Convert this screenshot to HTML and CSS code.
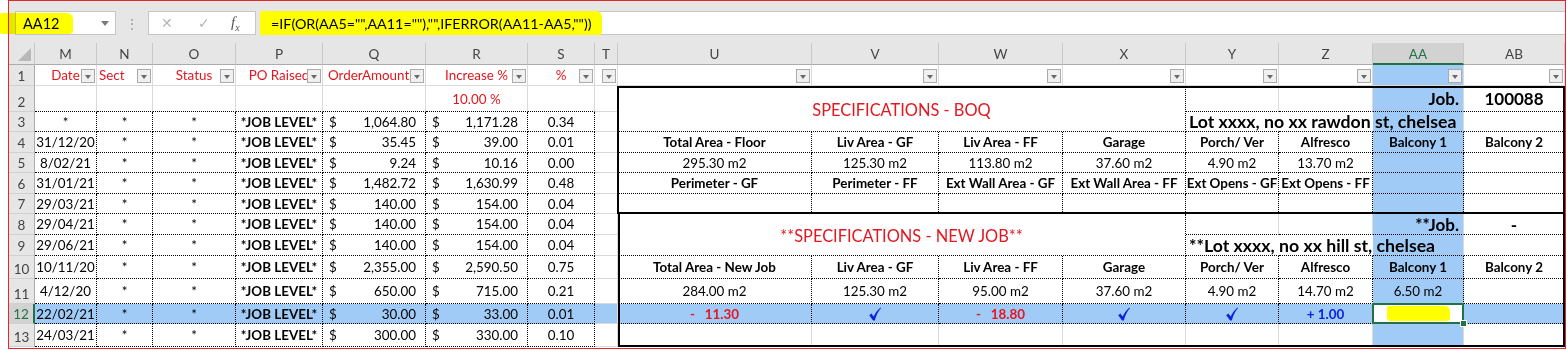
FILE: index.html
```html
<!DOCTYPE html>
<html>

<head>
  <meta charset="utf-8" />
  <title>Specifications - BOQ</title>
  <link rel="stylesheet" href="styles.css">
</head>

<body>
  <div class="hl-name"></div>
  <div class="frame">
    <div class="fbar">
      <div class="namebox"><span>AA12</span><i class="dd"></i></div>
      <div class="grip">&#8942;</div>
      <div class="fxbox">
        <span class="x">&#10005;</span>
        <span class="ok">&#10003;</span>
        <span class="fx"><i>f</i><sub>x</sub></span>
      </div>
      <div class="formula"><span class="hl">=IF(OR(AA5="",AA11=""),"",IFERROR(AA11-AA5,""))</span></div>
    </div>

    <div class="sheet">
      <!-- column headers -->
      <div class="h corner"><i></i></div>
      <div class="h">M</div><div class="h">N</div><div class="h">O</div><div class="h">P</div>
      <div class="h">Q</div><div class="h">R</div><div class="h">S</div><div class="h">T</div>
      <div class="h">U</div><div class="h">V</div><div class="h">W</div><div class="h">X</div>
      <div class="h">Y</div><div class="h">Z</div><div class="h act">AA</div><div class="h">AB</div>

      <!-- row 1 -->
      <div class="rh">1</div>
      <div class="red">Date<b class="fb"></b></div>
      <div class="red l">Sect<b class="fb"></b></div>
      <div class="red">Status<b class="fb"></b></div>
      <div class="red">PO Raised<b class="fb"></b></div>
      <div class="red l pq">OrderAmount<b class="fb"></b></div>
      <div class="red">Increase %<b class="fb"></b></div>
      <div class="red">%<b class="fb"></b></div>
      <div><b class="fb"></b></div>
      <div><b class="fb"></b></div>
      <div><b class="fb"></b></div>
      <div><b class="fb"></b></div>
      <div><b class="fb"></b></div>
      <div><b class="fb"></b></div>
      <div><b class="fb"></b></div>
      <div class="aa"><b class="fb"></b></div>
      <div><b class="fb"></b></div>

      <!-- row 2 -->
      <div class="rh">2</div>
      <div class="db"></div><div class="db"></div><div class="db"></div><div class="db"></div><div class="db"></div>
      <div class="db red">10.00 %</div>
      <div class="db"></div>
      <div></div>
      <div class="title dr db">SPECIFICATIONS - BOQ</div>
      <div class="db"></div>
      <div class="db"></div>
      <div class="aa db big r">Job.</div>
      <div class="db big">100088</div>

      <!-- row 3 -->
      <div class="rh">3</div>
      <div class="d">*</div><div class="d">*</div><div class="d">*</div><div class="d b">*JOB LEVEL*</div>
      <div class="d acc"><span>$</span><span>1,064.80</span></div>
      <div class="d acc"><span>$</span><span>1,171.28</span></div>
      <div class="d">0.34</div>
      <div></div>
      <div class="db big l spill">Lot xxxx, no xx rawdon st, chelsea</div>
      <div class="db nr"></div>
      <div class="aa db"></div>
      <div class="db"></div>

      <!-- row 4 -->
      <div class="rh">4</div>
      <div class="d">31/12/20</div><div class="d">*</div><div class="d">*</div><div class="d b">*JOB LEVEL*</div>
      <div class="d acc"><span>$</span><span>35.45</span></div>
      <div class="d acc"><span>$</span><span>39.00</span></div>
      <div class="d">0.01</div>
      <div></div>
      <div class="d b">Total Area - Floor</div>
      <div class="d b">Liv Area - GF</div>
      <div class="d b">Liv Area - FF</div>
      <div class="d b">Garage</div>
      <div class="d b">Porch/ Ver</div>
      <div class="d b">Alfresco</div>
      <div class="d b aa">Balcony 1</div>
      <div class="d b">Balcony 2</div>

      <!-- row 5 -->
      <div class="rh">5</div>
      <div class="d">8/02/21</div><div class="d">*</div><div class="d">*</div><div class="d b">*JOB LEVEL*</div>
      <div class="d acc"><span>$</span><span>9.24</span></div>
      <div class="d acc"><span>$</span><span>10.16</span></div>
      <div class="d">0.00</div>
      <div></div>
      <div class="d">295.30 m2</div>
      <div class="d">125.30 m2</div>
      <div class="d">113.80 m2</div>
      <div class="d">37.60 m2</div>
      <div class="d">4.90 m2</div>
      <div class="d">13.70 m2</div>
      <div class="d aa"></div>
      <div class="d"></div>

      <!-- row 6 -->
      <div class="rh">6</div>
      <div class="d">31/01/21</div><div class="d">*</div><div class="d">*</div><div class="d b">*JOB LEVEL*</div>
      <div class="d acc"><span>$</span><span>1,482.72</span></div>
      <div class="d acc"><span>$</span><span>1,630.99</span></div>
      <div class="d">0.48</div>
      <div></div>
      <div class="d b">Perimeter - GF</div>
      <div class="d b">Perimeter - FF</div>
      <div class="d b">Ext Wall Area - GF</div>
      <div class="d b">Ext Wall Area - FF</div>
      <div class="d b">Ext Opens - GF</div>
      <div class="d b">Ext Opens - FF</div>
      <div class="d aa"></div>
      <div class="d"></div>

      <!-- row 7 -->
      <div class="rh">7</div>
      <div class="d">29/03/21</div><div class="d">*</div><div class="d">*</div><div class="d b">*JOB LEVEL*</div>
      <div class="d acc"><span>$</span><span>140.00</span></div>
      <div class="d acc"><span>$</span><span>154.00</span></div>
      <div class="d">0.04</div>
      <div></div>
      <div class="dr"></div><div class="dr"></div><div class="dr"></div><div class="dr"></div>
      <div class="dr"></div><div class="dr"></div><div class="dr aa"></div><div></div>

      <!-- row 8 -->
      <div class="rh">8</div>
      <div class="d">29/04/21</div><div class="d">*</div><div class="d">*</div><div class="d b">*JOB LEVEL*</div>
      <div class="d acc"><span>$</span><span>140.00</span></div>
      <div class="d acc"><span>$</span><span>154.00</span></div>
      <div class="d">0.04</div>
      <div></div>
      <div class="title dr db">**SPECIFICATIONS - NEW JOB**</div>
      <div class="db"></div>
      <div class="db"></div>
      <div class="aa db big r">**Job.</div>
      <div class="db big">-</div>

      <!-- row 9 -->
      <div class="rh">9</div>
      <div class="d">29/06/21</div><div class="d">*</div><div class="d">*</div><div class="d b">*JOB LEVEL*</div>
      <div class="d acc"><span>$</span><span>140.00</span></div>
      <div class="d acc"><span>$</span><span>154.00</span></div>
      <div class="d">0.04</div>
      <div></div>
      <div class="db big l spill">**Lot xxxx, no xx hill st, chelsea</div>
      <div class="db nr"></div>
      <div class="aa db"></div>
      <div class="db"></div>

      <!-- row 10 -->
      <div class="rh">10</div>
      <div class="d">10/11/20</div><div class="d">*</div><div class="d">*</div><div class="d b">*JOB LEVEL*</div>
      <div class="d acc"><span>$</span><span>2,355.00</span></div>
      <div class="d acc"><span>$</span><span>2,590.50</span></div>
      <div class="d">0.75</div>
      <div></div>
      <div class="d b">Total Area - New Job</div>
      <div class="d b">Liv Area - GF</div>
      <div class="d b">Liv Area - FF</div>
      <div class="d b">Garage</div>
      <div class="d b">Porch/ Ver</div>
      <div class="d b">Alfresco</div>
      <div class="d b aa">Balcony 1</div>
      <div class="d b">Balcony 2</div>

      <!-- row 11 -->
      <div class="rh">11</div>
      <div class="d">4/12/20</div><div class="d">*</div><div class="d">*</div><div class="d b">*JOB LEVEL*</div>
      <div class="d acc"><span>$</span><span>650.00</span></div>
      <div class="d acc"><span>$</span><span>715.00</span></div>
      <div class="d">0.21</div>
      <div></div>
      <div class="d">284.00 m2</div>
      <div class="d">125.30 m2</div>
      <div class="d">95.00 m2</div>
      <div class="d">37.60 m2</div>
      <div class="d">4.90 m2</div>
      <div class="d">14.70 m2</div>
      <div class="d aa">6.50 m2</div>
      <div class="d"></div>

      <!-- row 12 (active row) -->
      <div class="rh act">12</div>
      <div class="d sr">22/02/21</div><div class="d sr">*</div><div class="d sr">*</div><div class="d sr b">*JOB LEVEL*</div>
      <div class="d sr acc"><span>$</span><span>30.00</span></div>
      <div class="d sr acc"><span>$</span><span>33.00</span></div>
      <div class="d sr">0.01</div>
      <div class="sr"></div>
      <div class="d sr b red pre">-   11.30</div>
      <div class="d sr"><svg class="tick" viewBox="0 0 12 14"><path d="M0.2 8.3 L2.4 6.6 L4.6 9.6 C6.4 5.6 8.6 2.8 11.5 0.4 L12 1.2 C9.3 4 7.2 8 5.8 13.6 L4.1 13.6 Z"/></svg></div>
      <div class="d sr b red pre">-   18.80</div>
      <div class="d sr"><svg class="tick" viewBox="0 0 12 14"><path d="M0.2 8.3 L2.4 6.6 L4.6 9.6 C6.4 5.6 8.6 2.8 11.5 0.4 L12 1.2 C9.3 4 7.2 8 5.8 13.6 L4.1 13.6 Z"/></svg></div>
      <div class="d sr"><svg class="tick" viewBox="0 0 12 14"><path d="M0.2 8.3 L2.4 6.6 L4.6 9.6 C6.4 5.6 8.6 2.8 11.5 0.4 L12 1.2 C9.3 4 7.2 8 5.8 13.6 L4.1 13.6 Z"/></svg></div>
      <div class="d sr b blu">+ 1.00</div>
      <div class="d active"><span class="mark"></span><i class="handle"></i></div>
      <div class="d sr"></div>

      <!-- row 13 -->
      <div class="rh">13</div>
      <div class="d">24/03/21</div><div class="d">*</div><div class="d">*</div><div class="d b">*JOB LEVEL*</div>
      <div class="d acc"><span>$</span><span>300.00</span></div>
      <div class="d acc"><span>$</span><span>330.00</span></div>
      <div class="d">0.10</div>
      <div></div>
      <div></div><div></div><div></div><div></div>
      <div></div><div></div><div class="aa"></div><div></div>

      <!-- thick outlines over the two spec blocks -->
      <div class="box box-top"></div>
      <div class="box box-bottom"></div>
    </div>
  </div>
</body>

</html>
```

FILE: styles.css
```css
* {
  box-sizing: border-box;
}

body {
  margin: 0;
  background-color: #ffffff;
  font-family: Lato, "Liberation Sans", sans-serif;
  color: #000000;
  overflow: hidden;
}

.frame {
  margin-left: 8px;
  width: 1558px;
  height: 349px;
  border: 1px solid #e3262b;
  background-color: #ffffff;
}

/* yellow highlighter stroke over the name box */
.hl-name {
  position: absolute;
  left: 0;
  top: 13px;
  width: 73px;
  height: 21px;
  background: #ffff00;
  border-radius: 2px 6px 4px 2px;
  mix-blend-mode: multiply;
  z-index: 5;
}

/* formula bar */
.fbar {
  height: 42px;
  background-color: #e6e6e6;
  display: flex;
  padding: 10px 0 0 6px;
}

.namebox {
  width: 101px;
  height: 24px;
  background: #ffffff;
  border: 1px solid #c6c6c6;
  display: flex;
  align-items: center;
  justify-content: space-between;
  padding: 0 6px 0 7px;
  font-size: 14.5px;
}

.dd {
  width: 0;
  height: 0;
  border-left: 4px solid transparent;
  border-right: 4px solid transparent;
  border-top: 5px solid #7a7a7a;
}

.grip {
  width: 32px;
  height: 24px;
  color: #a0a0a0;
  font-size: 14px;
  display: flex;
  align-items: center;
  justify-content: center;
}

.fxbox {
  width: 108px;
  height: 24px;
  background: #ffffff;
  border: 1px solid #c6c6c6;
  display: flex;
  align-items: center;
  padding-left: 12px;
  color: #b4b4b4;
  font-family: "DejaVu Sans", sans-serif;
  font-size: 14px;
}

.fxbox .x {
  width: 37px;
}

.fxbox .ok {
  width: 33px;
}

.fxbox .fx {
  font-family: "Liberation Serif", serif;
  color: #555555;
  font-size: 15px;
}

.fxbox .fx sub {
  font-size: 10px;
  font-style: italic;
}

.formula {
  flex: 1;
  height: 24px;
  margin-left: 4px;
  background: #ffffff;
  border: 1px solid #c6c6c6;
  border-right: 0;
  display: flex;
  align-items: center;
  font-size: 14.3px;
}

.formula .hl {
  background: #ffff00;
  height: 24px;
  display: flex;
  align-items: center;
  padding: 0 10px 0 11px;
  margin-left: -1px;
  border-radius: 0 6px 3px 0;
}

/* worksheet grid */
.sheet {
  position: relative;
  display: grid;
  grid-template-columns: 26px 62px 56px 83px 87px 103px 102px 67px 23px 194px 127px 124px 123px 93px 94px 91px 101px;
  grid-template-rows: 22px 21px 26px 20px 21px 20px 21px 20px 21px 21px 23px 25px 20px 23px;
  font-size: 13.4px;
}

.sheet > div {
  position: relative;
  display: flex;
  align-items: center;
  justify-content: center;
  white-space: nowrap;
  overflow: hidden;
  padding: 0 3px;
  border-right: 1px solid #dadada;
  border-bottom: 1px solid #dadada;
}

.sheet > .h {
  background: #e6e6e6;
  color: #444444;
  border-right: 1px solid #c8c8c8;
  border-bottom: 1px solid #ababab;
  font-size: 13.5px;
  padding-top: 1px;
}

.sheet > .h.act {
  background: #d2d2d2;
  color: #217346;
  border-bottom: 2px solid #217346;
}

.corner i {
  position: absolute;
  right: 3px;
  bottom: 3px;
  width: 13px;
  height: 13px;
  background: #b8b8b8;
  clip-path: polygon(100% 0, 100% 100%, 0 100%);
}

.sheet > .rh {
  background: #e6e6e6;
  color: #444444;
  border-right: 1px solid #ababab;
  border-bottom: 1px solid #d0d0d0;
  align-items: flex-end;
  padding-bottom: 1px;
  font-size: 13.5px;
}

.sheet > .rh.act {
  background: #d2d2d2;
  color: #217346;
  border-right: 2px solid #217346;
}

/* cell formats */
.sheet > .l {
  justify-content: flex-start;
  padding-left: 2px;
}

.sheet > .pq {
  padding-left: 5px;
}

.sheet > .r {
  justify-content: flex-end;
  padding-right: 4px;
}

.b {
  font-weight: bold;
}

.red {
  color: #e3171f;
}

.blu {
  color: #1020e0;
}

.sheet > .pre {
  white-space: pre;
}

.sheet > .acc {
  justify-content: space-between;
  padding: 0 9px 0 6px;
}

.sheet > .d {
  border-right: 1px dotted #000000;
  border-bottom: 1px dotted #000000;
}

.sheet > .db {
  border-bottom: 1px dotted #000000;
}

.sheet > .dr {
  border-right: 1px dotted #000000;
}

.sheet > .nr {
  border-right-color: transparent;
}

.aa,
.sr {
  background: #9fcbf6;
}

.sheet > .title {
  grid-column: span 4;
  grid-row: span 2;
  color: #e3171f;
  font-size: 16.4px;
  padding-top: 2px;
}

.sheet > .big {
  font-size: 17px;
  font-weight: bold;
}

.sheet > .spill {
  overflow: visible;
  z-index: 1;
  border-right-color: transparent;
  padding-left: 3px;
  font-size: 17.7px;
}

.tick {
  width: 12px;
  height: 14px;
  fill: #1020e0;
}

/* autofilter buttons in row 1 */
.fb {
  position: absolute;
  right: 1px;
  top: 4px;
  width: 14px;
  height: 14px;
  background: #f0f0f0;
  border: 1px solid #ababab;
}

.fb::after {
  content: "";
  position: absolute;
  left: 3px;
  top: 5px;
  border-left: 3px solid transparent;
  border-right: 3px solid transparent;
  border-top: 4px solid #6a6a6a;
}

/* active cell AA12 */
.sheet > .active {
  overflow: visible;
  background: #ffffff;
  z-index: 2;
}

.active::before {
  content: "";
  position: absolute;
  left: -1px;
  top: -1px;
  right: -1px;
  bottom: -1px;
  border: 2px solid #217346;
}

.mark {
  width: 63px;
  height: 15px;
  background: #ffff00;
  border-radius: 2px 5px 3px 4px;
}

.handle {
  position: absolute;
  right: -4px;
  bottom: -4px;
  width: 7px;
  height: 7px;
  background: #217346;
  border: 1px solid #ffffff;
}

/* thick outlines */
.sheet > .box {
  position: absolute;
  inset: 0;
  padding: 0;
  border: 2px solid #000000;
  pointer-events: none;
  z-index: 3;
}

.box-top {
  grid-column: 10 / 18;
  grid-row: 3 / 9;
  left: -1px !important;
}

.box-bottom {
  grid-column: 10 / 18;
  grid-row: 9 / 15;
  border-top: 0 !important;
}
```
